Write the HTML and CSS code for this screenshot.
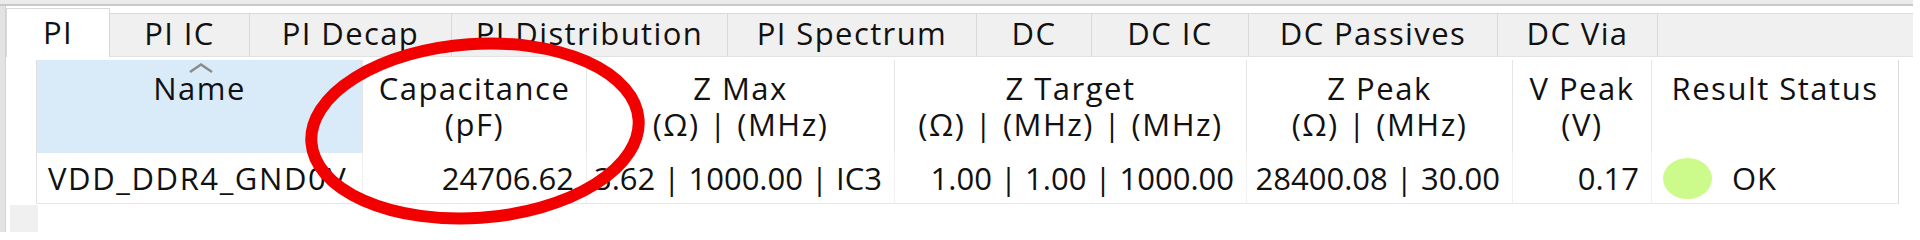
FILE: index.html
```html
<!DOCTYPE html>
<html>
<head>
<meta charset="utf-8">
<link rel="stylesheet" href="styles.css">
</head>
<body>
<div class="topline"></div>
<div class="body">
  <div class="leftband"></div>
  <div class="main">
    <div class="tabbar">
      <div class="tab active t1">PI</div>
      <div class="tab t2">PI IC</div>
      <div class="tab t3">PI Decap</div>
      <div class="tab t4">PI Distribution</div>
      <div class="tab t5">PI Spectrum</div>
      <div class="tab t6">DC</div>
      <div class="tab t7">DC IC</div>
      <div class="tab t8">DC Passives</div>
      <div class="tab t9">DC Via</div>
      <div class="tabfill"></div>
    </div>
    <div class="panel">
      <div class="grid">
        <div class="hc sorted">
          <svg class="sortarrow" width="24" height="10" viewBox="0 0 24 10"><polyline points="1,9 12,1.5 23,9" fill="none" stroke="#8a8a8a" stroke-width="2.4"/></svg>
          Name
        </div>
        <div class="hc">Capacitance<br>(pF)</div>
        <div class="hc">Z Max<br>(Ω) | (MHz)</div>
        <div class="hc">Z Target<br>(Ω) | (MHz) | (MHz)</div>
        <div class="hc">Z Peak<br>(Ω) | (MHz)</div>
        <div class="hc">V Peak<br>(V)</div>
        <div class="hc last">Result Status</div>

        <div class="dc name">VDD_DDR4_GND0V</div>
        <div class="dc num">24706.62</div>
        <div class="dc num">3.62 | 1000.00 | IC3</div>
        <div class="dc num">1.00 | 1.00 | 1000.00</div>
        <div class="dc num">28400.08 | 30.00</div>
        <div class="dc num">0.17</div>
        <div class="dc status last"><span class="dot"></span><span class="ok">OK</span></div>
      </div>
      <div class="corner"></div>
    </div>
  </div>
</div>
<svg class="annot" width="1920" height="240" viewBox="0 0 1920 240">
  <ellipse cx="475" cy="131" rx="164" ry="87" transform="rotate(-4 475 131)" fill="none" stroke="#f20000" stroke-width="12"/>
</svg>
</body>
</html>
```
FILE: styles.css
```css
html, body {
  margin: 0;
  padding: 0;
}
body {
  width: 1920px;
  height: 240px;
  overflow: hidden;
  position: relative;
  background: #ffffff;
  font-family: "Open Sans", "Noto Sans", sans-serif;
  font-size: 31px;
  color: #111111;
}
.topline {
  width: 1913px;
  height: 4px;
  background: #ebebeb;
  border-bottom: 2px solid #c9c9c9;
}
.body {
  display: flex;
  width: 1913px;
}
.leftband {
  width: 5px;
  height: 226px;
  background: #e3e3e3;
  border-right: 1px solid #d2d2d2;
}
.main {
  flex: 1;
}
.tabbar {
  display: flex;
  align-items: flex-end;
  height: 51px;
}
.tab {
  box-sizing: border-box;
  height: 44px;
  padding-top: 1px;
  line-height: 36px;
  text-align: center;
  letter-spacing: 1.4px;
  white-space: nowrap;
  background: #f0f0f0;
  border-top: 1px solid #d9d9d9;
  border-right: 1px solid #d9d9d9;
  border-bottom: 1px solid #e2e2e2;
}
.tab.active {
  height: 49px;
  padding-top: 5px;
  background: #ffffff;
  border-left: 1px solid #d9d9d9;
  border-bottom: none;
}
.t1 { width: 104px; }
.t2 { width: 140px; }
.t3 { width: 202px; }
.t4 { width: 276px; }
.t5 { width: 249px; }
.t6 { width: 115px; }
.t7 { width: 157px; }
.t8 { width: 249px; }
.t9 { width: 160px; }
.tabfill {
  flex: 1;
  box-sizing: border-box;
  height: 44px;
  background: #f0f0f0;
  border-top: 1px solid #dedede;
  border-bottom: 1px solid #e2e2e2;
}
.panel {
  box-sizing: border-box;
  height: 175px;
  padding-top: 3px;
}
.grid {
  display: grid;
  grid-template-columns: 326px 224px 308px 352px 266px 139px 246px;
  width: max-content;
  margin-left: 30px;
  border-left: 1px solid #e1e1e1;
  border-right: 1px solid #dcdcdc;
  border-bottom: 1px solid #e6e6e6;
}
.hc {
  position: relative;
  box-sizing: border-box;
  height: 93px;
  padding-top: 10px;
  line-height: 36px;
  text-align: center;
  letter-spacing: 1.5px;
  white-space: nowrap;
  border-right: 1px solid #e6e6e6;
}
.hc.sorted {
  background: #d9eaf8;
}
.sortarrow {
  position: absolute;
  top: 3px;
  left: 50%;
  margin-left: -11px;
}
.dc {
  box-sizing: border-box;
  height: 50px;
  padding-top: 7px;
  line-height: 36px;
  white-space: nowrap;
  border-right: 1px solid #f0f0f0;
}
.hc.last, .dc.last {
  border-right: none;
}
.dc.name {
  padding-left: 11px;
  letter-spacing: 1.6px;
}
.dc.num {
  text-align: right;
  padding-right: 12px;
}
.dc.status {
  display: flex;
  align-items: center;
  gap: 20px;
  padding-top: 0;
  padding-left: 11px;
}
.dot {
  width: 49px;
  height: 41px;
  border-radius: 50%;
  background: #cdfb8b;
}
.ok {
  line-height: 36px;
  letter-spacing: 1px;
}
.corner {
  width: 28px;
  height: 27px;
  margin-top: 1px;
  margin-left: 4px;
  background: #f0f0f0;
}
.annot {
  position: absolute;
  top: 0;
  left: 0;
  pointer-events: none;
}
```
